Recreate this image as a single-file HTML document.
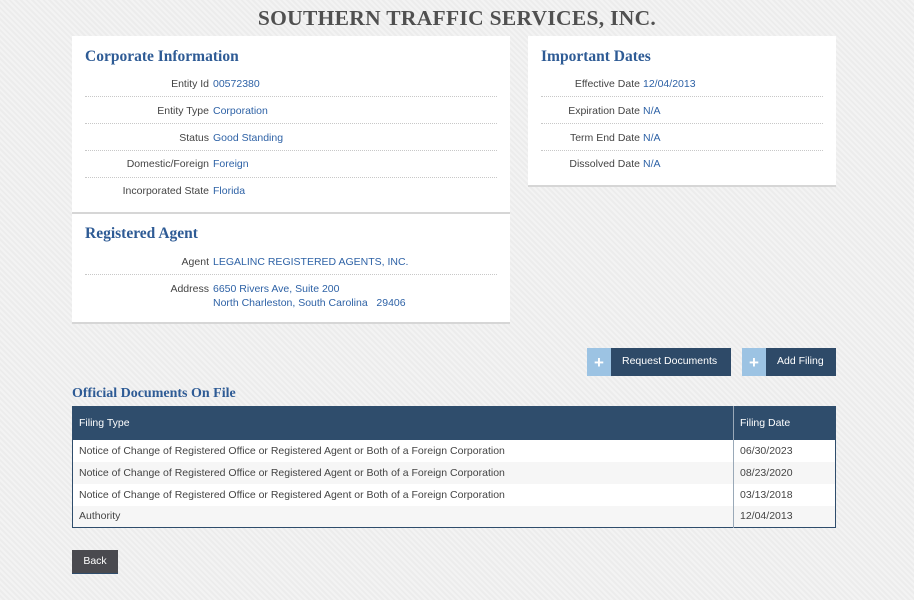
<!DOCTYPE html>
<html><head><meta charset="utf-8"><style>
*{margin:0;padding:0;box-sizing:border-box}
body{width:914px;height:600px;overflow:hidden;position:relative;font-family:"Liberation Sans",Arial,sans-serif;font-size:10.5px;color:#444;
background:#f0f0f0 repeating-linear-gradient(45deg,#f3f3f3 0,#f3f3f3 2px,#ececec 2px,#ececec 4px);}
.abs{position:absolute}
h1{position:absolute;left:0;width:914px;top:6px;text-align:center;font-family:"Liberation Serif","DejaVu Serif",serif;font-weight:bold;font-size:21.5px;color:#505050;letter-spacing:0.3px}
.panel{position:absolute;background:#fff;border-bottom:2px solid #d6d6d6}
.h{position:absolute;font-family:"Liberation Serif","DejaVu Serif",serif;font-weight:bold;font-size:15.5px;color:#2e5b95}
.lab{position:absolute;text-align:right;color:#444;white-space:nowrap}
.val{position:absolute;color:#2e62a6;white-space:nowrap}
.line{position:absolute;height:0;border-top:1px dotted #c8c8c8}
.btn{position:absolute;height:28px;background:#2e4a68;color:#fff;font-size:10.5px;line-height:27px}
.btn .p{position:absolute;left:0;top:0;width:24px;height:28px;background:#9cc3e3;color:#fff;font-weight:bold;font-size:17px;text-align:center;line-height:29px}
table{position:absolute;left:72px;top:406px;width:764px;border-collapse:collapse;border:1px solid #2f4d6c;background:#fff}
th{background:#2f4d6c;color:#fff;text-align:left;font-weight:normal;height:33px;padding-left:6px;font-size:10.5px}
td{height:22px;padding-left:6px;font-size:10.5px;color:#444}
tr.g td{background:#f6f6f6}
.c2{border-left:1px solid #9aa9b8}
</style></head><body>
<h1>SOUTHERN TRAFFIC SERVICES, INC.</h1>

<div class="panel" style="left:72px;top:36px;width:438px;height:178px"></div>
<div class="panel" style="left:72px;top:214px;width:438px;height:110px"></div>
<div class="panel" style="left:528px;top:36px;width:308px;height:151px"></div>

<div class="h" style="left:85px;top:48px">Corporate Information</div>
<div class="lab" style="left:85px;width:124px;top:78px">Entity Id</div><div class="val" style="left:213px;top:78px">00572380</div>
<div class="line" style="left:85px;width:412px;top:96px"></div>
<div class="lab" style="left:85px;width:124px;top:105px">Entity Type</div><div class="val" style="left:213px;top:105px">Corporation</div>
<div class="line" style="left:85px;width:412px;top:123px"></div>
<div class="lab" style="left:85px;width:124px;top:132px">Status</div><div class="val" style="left:213px;top:132px">Good Standing</div>
<div class="line" style="left:85px;width:412px;top:150px"></div>
<div class="lab" style="left:85px;width:124px;top:158px">Domestic/Foreign</div><div class="val" style="left:213px;top:158px">Foreign</div>
<div class="line" style="left:85px;width:412px;top:177px"></div>
<div class="lab" style="left:85px;width:124px;top:185px">Incorporated State</div><div class="val" style="left:213px;top:185px">Florida</div>

<div class="h" style="left:85px;top:225px">Registered Agent</div>
<div class="lab" style="left:85px;width:124px;top:256px">Agent</div><div class="val" style="left:213px;top:256px">LEGALINC REGISTERED AGENTS, INC.</div>
<div class="line" style="left:85px;width:412px;top:274px"></div>
<div class="lab" style="left:85px;width:124px;top:283px">Address</div><div class="val" style="left:213px;top:282px;line-height:14px">6650 Rivers Ave, Suite 200<br>North Charleston, South Carolina &nbsp;&nbsp;29406</div>

<div class="h" style="left:541px;top:48px">Important Dates</div>
<div class="lab" style="left:541px;width:99px;top:78px">Effective Date</div><div class="val" style="left:643px;top:78px">12/04/2013</div>
<div class="line" style="left:541px;width:282px;top:96px"></div>
<div class="lab" style="left:541px;width:99px;top:105px">Expiration Date</div><div class="val" style="left:643px;top:105px">N/A</div>
<div class="line" style="left:541px;width:282px;top:123px"></div>
<div class="lab" style="left:541px;width:99px;top:132px">Term End Date</div><div class="val" style="left:643px;top:132px">N/A</div>
<div class="line" style="left:541px;width:282px;top:150px"></div>
<div class="lab" style="left:541px;width:99px;top:158px">Dissolved Date</div><div class="val" style="left:643px;top:158px">N/A</div>

<div class="btn" style="left:587px;top:348px;width:144px"><span class="p">+</span><span style="position:absolute;left:35px">Request Documents</span></div>
<div class="btn" style="left:742px;top:348px;width:94px"><span class="p">+</span><span style="position:absolute;left:35px">Add Filing</span></div>

<div class="h" style="left:72px;top:386px;font-size:14px">Official Documents On File</div>
<table>
<tr><th style="width:661px">Filing Type</th><th class="c2">Filing Date</th></tr>
<tr><td>Notice of Change of Registered Office or Registered Agent or Both of a Foreign Corporation</td><td class="c2">06/30/2023</td></tr>
<tr class="g"><td>Notice of Change of Registered Office or Registered Agent or Both of a Foreign Corporation</td><td class="c2">08/23/2020</td></tr>
<tr><td>Notice of Change of Registered Office or Registered Agent or Both of a Foreign Corporation</td><td class="c2">03/13/2018</td></tr>
<tr class="g"><td>Authority</td><td class="c2">12/04/2013</td></tr>
</table>

<div class="abs" style="left:72px;top:550px;width:46px;height:24px;background:#4a4a4f;color:#fff;text-align:center;line-height:23px;font-size:10.5px;border-bottom:1px solid #2f4d6c">Back</div>
</body></html>
